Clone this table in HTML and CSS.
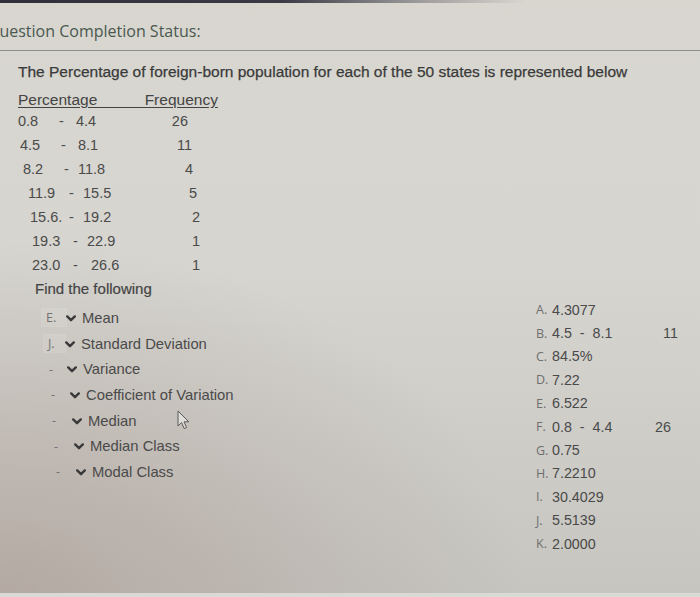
FILE: index.html
```html
<!DOCTYPE html>
<html>
<head>
<meta charset="utf-8">
<link rel="stylesheet" href="styles.css">
</head>
<body>
<div class="topbar"></div>
<header class="status"><span class="status-text">Question Completion Status:</span></header>
<main class="content">
  <p class="title">The Percentage of foreign-born population for each of the 50 states is represented below</p>
  <div class="thead"><span class="ul">Percentage&nbsp;&nbsp;&nbsp;&nbsp;&nbsp;&nbsp;&nbsp;&nbsp;&nbsp;&nbsp;&nbsp;Frequency</span></div>
  <div class="freq-table">
    <div class="row r1"><span class="lo">0.8</span><span class="dash">-</span><span class="hi">4.4</span><span class="fq">26</span></div>
    <div class="row r2"><span class="lo">4.5</span><span class="dash">-</span><span class="hi">8.1</span><span class="fq">11</span></div>
    <div class="row r3"><span class="lo">8.2</span><span class="dash">-</span><span class="hi">11.8</span><span class="fq">4</span></div>
    <div class="row r4"><span class="lo">11.9</span><span class="dash">-</span><span class="hi">15.5</span><span class="fq">5</span></div>
    <div class="row r5"><span class="lo">15.6.</span><span class="dash">-</span><span class="hi">19.2</span><span class="fq">2</span></div>
    <div class="row r6"><span class="lo">19.3</span><span class="dash">-</span><span class="hi">22.9</span><span class="fq">1</span></div>
    <div class="row r7"><span class="lo">23.0</span><span class="dash">-</span><span class="hi">26.6</span><span class="fq">1</span></div>
  </div>
  <p class="find">Find the following</p>
  <div class="match">
    <div class="selects">
      <div class="sel s1"><span class="lab boxed">E.</span><svg class="chev" viewBox="0 0 10 7"><polyline points="1.2,1.4 5,5.2 8.8,1.4"/></svg><span class="name">Mean</span></div>
      <div class="sel s2"><span class="lab boxed">J.</span><svg class="chev" viewBox="0 0 10 7"><polyline points="1.2,1.4 5,5.2 8.8,1.4"/></svg><span class="name">Standard Deviation</span></div>
      <div class="sel s3"><span class="lab">-</span><svg class="chev" viewBox="0 0 10 7"><polyline points="1.2,1.4 5,5.2 8.8,1.4"/></svg><span class="name">Variance</span></div>
      <div class="sel s4"><span class="lab">-</span><svg class="chev" viewBox="0 0 10 7"><polyline points="1.2,1.4 5,5.2 8.8,1.4"/></svg><span class="name">Coefficient of Variation</span></div>
      <div class="sel s5"><span class="lab">-</span><svg class="chev" viewBox="0 0 10 7"><polyline points="1.2,1.4 5,5.2 8.8,1.4"/></svg><span class="name">Median</span>
        <svg class="cursor" viewBox="0 0 13 21"><path d="M1 1 L1 16 L4.6 12.6 L7.2 18.6 L9.6 17.6 L7 11.8 L11.8 11.8 Z"/></svg>
      </div>
      <div class="sel s6"><span class="lab">-</span><svg class="chev" viewBox="0 0 10 7"><polyline points="1.2,1.4 5,5.2 8.8,1.4"/></svg><span class="name">Median Class</span></div>
      <div class="sel s7"><span class="lab">-</span><svg class="chev" viewBox="0 0 10 7"><polyline points="1.2,1.4 5,5.2 8.8,1.4"/></svg><span class="name">Modal Class</span></div>
    </div>
    <ol class="answers">
      <li><span class="al">A.</span><span class="av">4.3077</span></li>
      <li><span class="al">B.</span><span class="av">4.5&nbsp;&nbsp;-&nbsp;&nbsp;8.1</span><span class="ax x11">11</span></li>
      <li><span class="al">C.</span><span class="av">84.5%</span></li>
      <li><span class="al">D.</span><span class="av">7.22</span></li>
      <li><span class="al">E.</span><span class="av">6.522</span></li>
      <li><span class="al">F.</span><span class="av">0.8&nbsp;&nbsp;-&nbsp;&nbsp;4.4</span><span class="ax x26">26</span></li>
      <li><span class="al">G.</span><span class="av">0.75</span></li>
      <li><span class="al">H.</span><span class="av">7.2210</span></li>
      <li><span class="al">I.</span><span class="av">30.4029</span></li>
      <li><span class="al">J.</span><span class="av">5.5139</span></li>
      <li><span class="al">K.</span><span class="av">2.0000</span></li>
    </ol>
  </div>
</main>
</body>
</html>
```
FILE: styles.css
```css
html, body {
  margin: 0;
  padding: 0;
  height: 100%;
}
body {
  width: 700px;
  height: 597px;
  overflow: hidden;
  font-family: "Liberation Sans", Arial, sans-serif;
  color: #444;
  background:
    linear-gradient(180deg, rgba(0,0,0,0) 99.4%, #d9d9d6 99.4%),
    radial-gradient(ellipse 75% 60% at 0% 100%, rgba(150,126,116,0.4), rgba(150,126,116,0) 100%),
    linear-gradient(180deg, #d8d6cf 0%, #d6d5d0 45%, #c6c5c0 100%);
}
.topbar {
  height: 3px;
  background: linear-gradient(90deg, #302f3a 0%, #3a3944 40%, rgba(70,70,80,0.4) 60%, rgba(200,200,200,0) 75%);
}
.status {
  box-sizing: border-box;
  height: 48px;
  padding-top: 17px;
  border-bottom: 1px solid #8e8e8a;
  overflow: hidden;
}
.status-text {
  display: block;
  margin-left: -13px;
  font-family: "Open Sans", sans-serif;
  font-size: 16px;
  line-height: 22px;
  color: #4a5850;
}
.title {
  margin: 12px 0 0 18px;
  font-size: 15.5px;
  line-height: 18px;
  color: #3a3a3a;
  -webkit-text-stroke: 0.25px #3a3a3a;
}
.thead {
  margin: 10px 0 0 18px;
  font-size: 15.5px;
  line-height: 18px;
  color: #444;
}
.ul {
  text-decoration: underline;
  text-underline-offset: 2px;
}
.freq-table {
  font-size: 14.5px;
  color: #4a4a4a;
}
.row {
  display: flex;
  align-items: center;
  height: 24px;
  box-sizing: border-box;
}
.lo { width: 41px; }
.dash { width: 17px; }
.hi { flex: 1; }
.fq { text-align: right; }
.r1 { padding-left: 18px; width: 188px; }
.r2 { padding-left: 20px; width: 192px; }
.r3 { padding-left: 23px; width: 193px; }
.r3 .hi, .r4 .hi, .r5 .hi, .r6 .hi, .r7 .hi { margin-left: -3px; }
.r4 { padding-left: 28px; width: 197px; }
.r5 { padding-left: 30px; width: 200px; }
.r5 .lo { width: 39px; }
.r6 { padding-left: 32px; width: 200px; }
.r7 { padding-left: 32px; width: 200px; }
.r7 .hi { margin-left: 1px; }
.find {
  margin: 3px 0 0 35px;
  font-size: 15px;
  line-height: 18px;
  color: #444;
  -webkit-text-stroke: 0.2px #444;
}
.match {
  display: flex;
}
.selects {
  width: 536px;
  padding-top: 7px;
}
.sel {
  position: relative;
  display: flex;
  align-items: center;
  height: 25.7px;
  font-size: 14.8px;
  color: #4a4a4a;
}
.lab {
  font-size: 12.5px;
  color: #737373;
  font-family: "Open Sans", sans-serif;
  width: 18px;
}
.boxed {
  background: rgba(255,255,255,0.1);
  box-shadow: 0 0 0 1px rgba(255,255,255,0.14);
  padding: 0 0 0 4px;
}
.chev {
  width: 10px;
  height: 7px;
  margin: 1px 6px 0 0;
  fill: none;
  stroke: #3a3a3a;
  stroke-width: 2.4;
  stroke-linecap: round;
  stroke-linejoin: round;
}
.s1 { padding-left: 42px; }
.s1 .lab { width: 20px; }
.s2 { padding-left: 44px; }
.s2 .lab { width: 17px; }
.s3 { padding-left: 49px; }
.s4 { padding-left: 51px; }
.s4 .lab { width: 19px; }
.s5 { padding-left: 52px; }
.s5 .lab { width: 20px; }
.s6 { padding-left: 54px; }
.s6 .lab { width: 20px; }
.s7 { padding-left: 56px; }
.s7 .lab { width: 20px; }
.cursor {
  position: absolute;
  left: 177px;
  top: 2px;
  width: 13px;
  height: 21px;
  fill: rgba(240,240,238,0.6);
  stroke: #5a5a5a;
  stroke-width: 1;
  stroke-linejoin: round;
}
.answers {
  list-style: none;
  margin: 0;
  padding: 0;
  flex: 1;
}
.answers li {
  position: relative;
  display: flex;
  align-items: center;
  height: 23.4px;
  font-size: 14.3px;
  color: #4a4a4a;
}
.al {
  width: 16px;
  font-family: "Open Sans", sans-serif;
  font-size: 12.5px;
  color: #6f6f6f;
}
.av {
  white-space: nowrap;
}
.ax {
  position: absolute;
  top: 50%;
  transform: translateY(-50%);
}
.x11 { left: 127px; }
.x26 { left: 119px; }
```
